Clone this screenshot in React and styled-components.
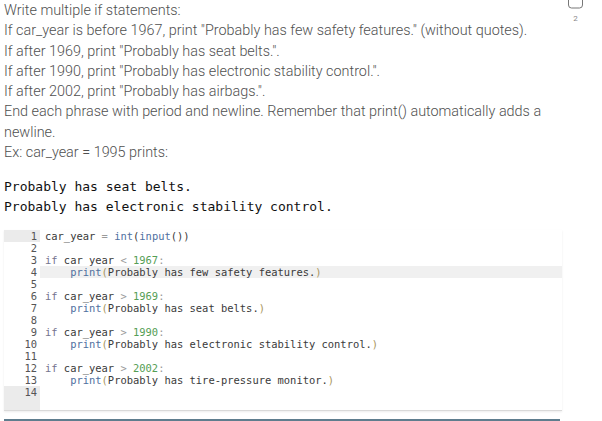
import React from "react";
import styled, { createGlobalStyle } from "styled-components";

const Global = createGlobalStyle`
  html, body { margin: 0; padding: 0; background: #fff; }
  body { width: 602px; height: 421px; overflow: hidden; }
`;

const Page = styled.div`
  position: relative;
  width: 602px;
  padding: 1px 0 0 4px;
  box-sizing: border-box;
  font-family: Roboto, "Noto Sans", sans-serif;
`;

const Prompt = styled.div`
  font-weight: 300;
  font-size: 14.4px;
  line-height: 20.25px;
  color: #505050;
  width: 545px;
`;

const Output = styled.pre`
  margin: 14px 0 0 0;
  font-family: "DejaVu Sans Mono", monospace;
  font-size: 13px;
  line-height: 20px;
  color: #111;
`;

const Editor = styled.div`
  margin-top: 13px;
  width: 558px;
  height: 180px;
  display: grid;
  grid-template-columns: 36px 1fr;
  border-bottom: 1px solid #d9d9d9;
  box-shadow: 0 1px 2px rgba(0,0,0,0.08);
  font-family: "DejaVu Sans Mono", monospace;
  font-size: 10.45px;
  line-height: 12px;
`;

const Gutter = styled.div`
  display: flex;
  flex-direction: column;
`;

const Num = styled.div`
  text-align: right;
  padding-right: 3px;
  height: 12px;
  color: #555;
  background: ${p => (p.$active ? "#ebebeb" : "transparent")};
  ${p => p.$fill && "flex: 1;"}
`;

const Code = styled.div`
  display: flex;
  flex-direction: column;
`;

const Line = styled.div`
  white-space: pre;
  padding-left: 5px;
  color: #3a3a3a;
  height: 12px;
  background: ${p => (p.$hl ? "#f0f0f0" : "transparent")};
`;

const Kw = styled.span` color: #74748e; `;
const Fn = styled.span` color: #50709f; `;
const NumLit = styled.span` color: #559e55; `;
const Op = styled.span` color: #9a9a9a; `;
const Paren = styled.span` color: #a8955c; `;

const Bar = styled.div`
  margin-top: 8px;
  width: 556px;
  height: 3px;
  background: #5f7d8e;
`;

const Badge = styled.div`
  position: absolute;
  top: 0;
  left: 567px;
  width: 17px;
  display: flex;
  flex-direction: column;
  align-items: center;
  font-family: Roboto, sans-serif;
  font-size: 8px;
  line-height: 10px;
  color: #888;
`;

const BadgeNum = styled.span`
  margin-top: 5px;
`;

const lines = [
  <><span>car_year </span><Op>=</Op> <Fn>int</Fn>(<Fn>input</Fn>())</>,
  <></>,
  <><Kw>if</Kw> car_year <Op>&lt;</Op> <NumLit>1967</NumLit><Op>:</Op></>,
  <>    <Fn>print</Fn><Paren>(</Paren>Probably has few safety features.<Paren>)</Paren></>,
  <></>,
  <><Kw>if</Kw> car_year <Op>&gt;</Op> <NumLit>1969</NumLit><Op>:</Op></>,
  <>    <Fn>print</Fn><Paren>(</Paren>Probably has seat belts.<Paren>)</Paren></>,
  <></>,
  <><Kw>if</Kw> car_year <Op>&gt;</Op> <NumLit>1990</NumLit><Op>:</Op></>,
  <>    <Fn>print</Fn><Paren>(</Paren>Probably has electronic stability control.<Paren>)</Paren></>,
  <></>,
  <><Kw>if</Kw> car_year <Op>&gt;</Op> <NumLit>2002</NumLit><Op>:</Op></>,
  <>    <Fn>print</Fn><Paren>(</Paren>Probably has tire-pressure monitor.<Paren>)</Paren></>,
  <></>,
];

export default function App() {
  return (
    <Page>
      <Global />
      <Badge>
        <svg width="17" height="9" viewBox="0 0 17 9">
          <path d="M1.5 0 V5 Q1.5 8 4.5 8 H12.5 Q15.5 8 15.5 5 V0" fill="none" stroke="#777" strokeWidth="1" />
        </svg>
        <BadgeNum>2</BadgeNum>
      </Badge>
      <Prompt>
        <div>Write multiple if statements:</div>
        <div>If car_year is before 1967, print "Probably has few safety features." (without quotes).</div>
        <div>If after 1969, print "Probably has seat belts.".</div>
        <div>If after 1990, print "Probably has electronic stability control.".</div>
        <div>If after 2002, print "Probably has airbags.".</div>
        <div>End each phrase with period and newline. Remember that print() automatically adds a newline.</div>
        <div>Ex: car_year = 1995 prints:</div>
      </Prompt>
      <Output>{"Probably has seat belts.\nProbably has electronic stability control."}</Output>
      <Editor>
        <Gutter>
          {lines.map((_, i) => (
            <Num key={i} $active={i === 0 || i === 13} $fill={i === 13}>{i + 1}</Num>
          ))}
        </Gutter>
        <Code>
          {lines.map((l, i) => (
            <Line key={i} $hl={i === 3}>{l}</Line>
          ))}
        </Code>
      </Editor>
      <Bar />
    </Page>
  );
}
